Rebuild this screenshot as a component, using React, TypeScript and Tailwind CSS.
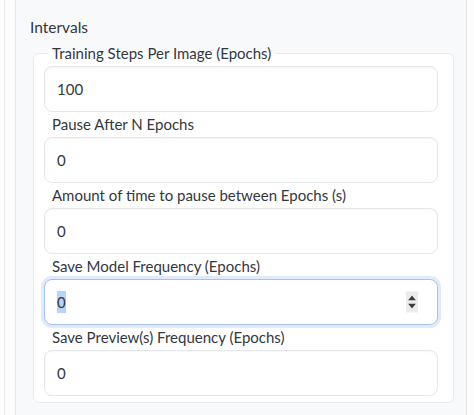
import React from 'react'

type Field = {
  label: string
  value: string
  focused?: boolean
}

const FIELDS: Field[] = [
  { label: 'Training Steps Per Image (Epochs)', value: '100' },
  { label: 'Pause After N Epochs', value: '0' },
  { label: 'Amount of time to pause between Epochs (s)', value: '0' },
  { label: 'Save Model Frequency (Epochs)', value: '0', focused: true },
  { label: 'Save Preview(s) Frequency (Epochs)', value: '0' },
]

function Spinner() {
  return (
    <div className="absolute right-[19px] top-1/2 flex h-[21px] w-[12px] -translate-y-1/2 flex-col items-center justify-center gap-[3px] bg-[#ececec]">
      <svg width="8" height="5" viewBox="0 0 8 5">
        <path d="M4 0 L8 5 L0 5 Z" fill="#3a3a3a" />
      </svg>
      <svg width="8" height="5" viewBox="0 0 8 5">
        <path d="M0 0 L8 0 L4 5 Z" fill="#3a3a3a" />
      </svg>
    </div>
  )
}

function NumberField({ field, first }: { field: Field; first?: boolean }) {
  return (
    <div className="flex flex-col">
      {!first && <span className="h-[25px] pl-[8px] text-[15px] leading-[25px]">{field.label}</span>}
      <div
        className={`relative flex h-[46px] items-center rounded-lg border bg-white pl-[12px] text-[15px] ${
          field.focused
            ? 'border-[#a6c2f0] shadow-[0_0_0_3px_#e0eafb]'
            : 'border-[#e5e7eb] shadow-[inset_0_1px_2px_rgba(0,0,0,0.04)]'
        }`}
      >
        {field.focused ? <span className="bg-[#b5d3fb]">{field.value}</span> : <span>{field.value}</span>}
        {field.focused && <Spinner />}
      </div>
    </div>
  )
}

export default function App() {
  return (
    <div
      className="h-[415px] w-[474px] overflow-hidden bg-white text-[#33373e]"
      style={{ fontFamily: 'Lato, "Noto Sans", sans-serif' }}
    >
      <div className="ml-[4px] h-full border-l border-[#e8e9ec] bg-[#fcfcfd] pl-[10px]">
        <div className="h-full w-[452px] border-x border-[#e5e7eb] bg-[#f8f9fb] pl-[14px] pt-[15px]">
          <h3 className="text-[15.5px] leading-[25px]">Intervals</h3>
          <fieldset className="mt-[1px] ml-[3px] w-[421px] rounded-md border border-[#e9eaed] bg-white pb-[6px] pl-[10px] pr-[15px]">
            <legend className="ml-[4px] px-[4px] text-[15px] leading-[25px]">{FIELDS[0].label}</legend>
            <div className="flex flex-col">
              {FIELDS.map((f, i) => (
                <NumberField key={f.label} field={f} first={i === 0} />
              ))}
            </div>
          </fieldset>
        </div>
      </div>
    </div>
  )
}
